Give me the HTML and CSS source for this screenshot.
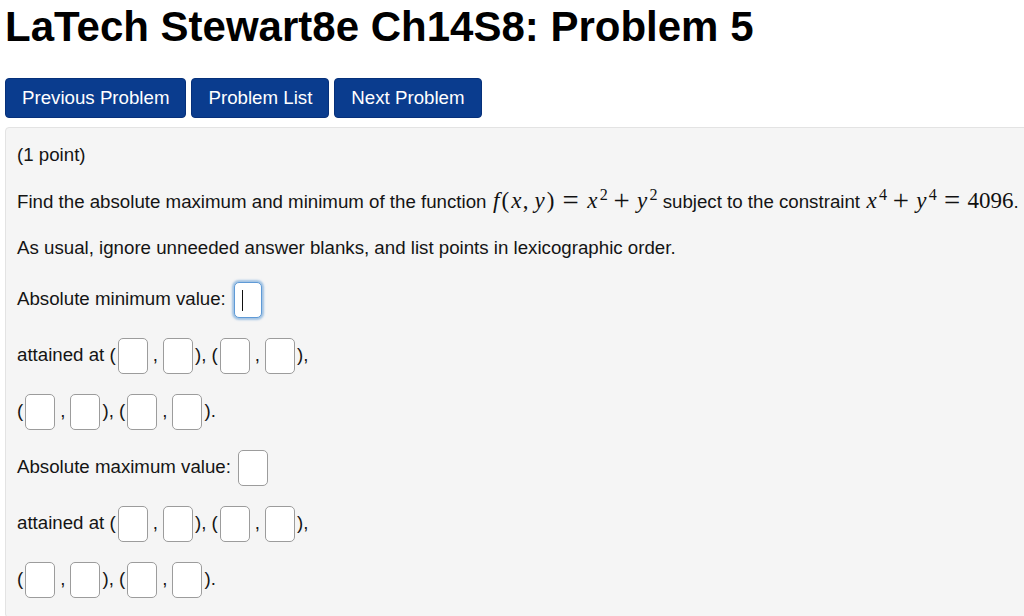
FILE: index.html
```html
<!DOCTYPE html>
<html lang="en">
<head>
<meta charset="utf-8">
<title>LaTech Stewart8e Ch14S8: Problem 5</title>
<link rel="stylesheet" href="styles.css">
</head>
<body>
<h1 class="title">LaTech Stewart8e Ch14S8: Problem 5</h1>
<nav class="nav">
  <a class="btn">Previous Problem</a>
  <a class="btn">Problem List</a>
  <a class="btn">Next Problem</a>
</nav>
<div class="panel">
  <div class="line">(1 point)</div>
  <div class="line">Find the absolute maximum and minimum of the function <span class="math"><i>f</i><span class="p">(</span><i>x</i><span class="cm">,</span><i>y</i><span class="p">)</span><span class="rel">=</span><i>x</i><sup>2</sup><span class="bin">+</span><i>y</i><sup>2</sup></span> subject to the constraint <span class="math"><i>x</i><sup>4</sup><span class="bin">+</span><i>y</i><sup>4</sup><span class="rel">=</span>4096</span>.</div>
  <div class="line">As usual, ignore unneeded answer blanks, and list points in lexicographic order.</div>
  <div class="row">Absolute minimum value: <span class="blank focused"><span class="caret"></span></span></div>
  <div class="row">attained at (<span class="blank"></span><span class="c">,</span><span class="blank"></span>), (<span class="blank"></span><span class="c">,</span><span class="blank"></span>),</div>
  <div class="row">(<span class="blank"></span><span class="c">,</span><span class="blank"></span>), (<span class="blank"></span><span class="c">,</span><span class="blank"></span>).</div>
  <div class="row">Absolute maximum value: <span class="blank"></span></div>
  <div class="row">attained at (<span class="blank"></span><span class="c">,</span><span class="blank"></span>), (<span class="blank"></span><span class="c">,</span><span class="blank"></span>),</div>
  <div class="row">(<span class="blank"></span><span class="c">,</span><span class="blank"></span>), (<span class="blank"></span><span class="c">,</span><span class="blank"></span>).</div>
</div>
</body>
</html>
```
FILE: styles.css
```css
html {
  overflow: hidden;
}
body {
  margin: 0;
  padding: 0 0 0 5px;
  font-family: "Liberation Sans", Arial, sans-serif;
  color: #141414;
  background: #fff;
}
.title {
  margin: 0;
  padding-top: 2px;
  font-size: 42px;
  line-height: 50px;
  font-weight: bold;
  color: #000;
}
.nav {
  display: flex;
  gap: 5px;
  margin-top: 26px;
}
.btn {
  display: block;
  height: 40px;
  box-sizing: border-box;
  padding: 0 16px;
  line-height: 38px;
  font-size: 18.7px;
  color: #fff;
  background: #0a3c8e;
  border: 1px solid #06307a;
  border-radius: 4px;
}
.panel {
  margin-top: 9px;
  width: 1060px;
  box-sizing: border-box;
  background: #f5f5f5;
  border: 1px solid #e3e3e3;
  border-radius: 4px;
  padding: 14px 11px 20px;
  display: flex;
  flex-direction: column;
  gap: 20px;
  font-size: 18.7px;
}
.line {
  line-height: 26px;
  white-space: nowrap;
}
.row {
  height: 36px;
  line-height: 36px;
  white-space: nowrap;
}
.blank {
  display: inline-block;
  vertical-align: middle;
  width: 30px;
  height: 36px;
  box-sizing: border-box;
  margin: 0 2px;
  background: #fff;
  border: 1px solid #9c9c9c;
  border-radius: 5px;
  position: relative;
}
.blank.focused {
  border-color: #5f9ad6;
  box-shadow: 0 0 2px 2px rgba(95, 154, 214, 0.55);
  width: 28px;
  margin-left: 3px;
}
.caret {
  position: absolute;
  left: 7px;
  top: 7px;
  width: 1px;
  height: 21px;
  background: #111;
}
.c {
  margin: 0 3px;
}
.math {
  font-family: "Liberation Serif", "Times New Roman", serif;
  font-size: 23px;
  color: #111;
}
.math i {
  font-style: italic;
  padding: 0 0.06em;
}
.math sup {
  font-size: 70%;
  line-height: 0;
  vertical-align: 0.48em;
  margin-left: 0.05em;
}
.math .p {
  padding: 0 0.03em;
}
.math .cm {
  margin-right: 0.2em;
}
.math .rel,
.math .bin {
  display: inline-block;
  width: 0.65em;
  text-align: center;
  font-size: 125%;
  line-height: 0;
  vertical-align: -0.06em;
}
.math .rel {
  margin: 0 0.21em;
}
.math .bin {
  margin: 0 0.16em;
}
```
